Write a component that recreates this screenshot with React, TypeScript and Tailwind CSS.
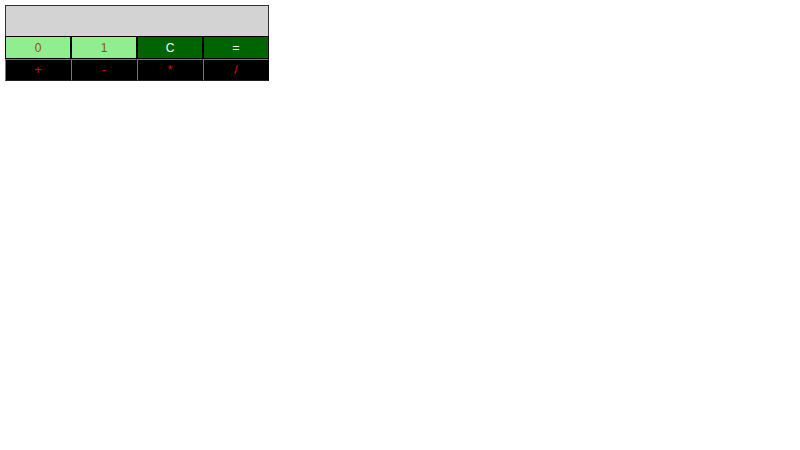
import { useState } from "react";
import clsx from "clsx";

type Kind = "digit" | "action" | "operator";

const KEYS: { label: string; name: string; kind: Kind }[] = [
  { label: "0", name: "Zero", kind: "digit" },
  { label: "1", name: "One", kind: "digit" },
  { label: "C", name: "Clear", kind: "action" },
  { label: "=", name: "Equals", kind: "action" },
  { label: "+", name: "Add", kind: "operator" },
  { label: "-", name: "Subtract", kind: "operator" },
  { label: "*", name: "Multiply", kind: "operator" },
  { label: "/", name: "Divide", kind: "operator" },
];

const KIND_STYLES: Record<Kind, string> = {
  digit: "border-black bg-[#90ee90] text-[#9c4a1a]",
  action: "border-black bg-[#006400] text-white",
  operator:
    "border-t-[#767676] border-l-[#767676] border-r-black border-b-[#222222] bg-black text-[#e01010]",
};

function evaluate(expression: string) {
  const match = expression.match(/^([01]+)([-+*/])([01]+)$/);
  if (!match) return expression;

  const a = parseInt(match[1], 2);
  const b = parseInt(match[3], 2);
  switch (match[2]) {
    case "+":
      return (a + b).toString(2);
    case "-":
      return (a - b).toString(2);
    case "*":
      return (a * b).toString(2);
    default:
      return b === 0 ? "" : Math.floor(a / b).toString(2);
  }
}

export default function App() {
  const [expression, setExpression] = useState("");

  function press(label: string) {
    if (label === "C") setExpression("");
    else if (label === "=") setExpression(evaluate(expression));
    else setExpression(expression + label);
  }

  return (
    <main className="p-[5px] font-['Liberation_Sans',Arial,sans-serif] text-xs">
      <div className="w-full max-w-66">
        <input
          type="text"
          readOnly
          aria-label="Result"
          value={expression}
          className="block h-[31px] w-full border border-b-0 border-[#333333] bg-[#d3d3d3] px-2 outline-none"
        />
        <div className="grid grid-cols-4 grid-rows-[23px_22px]">
          {KEYS.map(({ label, name, kind }) => (
            <button
              key={label}
              type="button"
              aria-label={name}
              onClick={() => press(label)}
              className={clsx(
                "border text-center text-xs",
                KIND_STYLES[kind],
              )}
            >
              {label}
            </button>
          ))}
        </div>
      </div>
    </main>
  );
}
